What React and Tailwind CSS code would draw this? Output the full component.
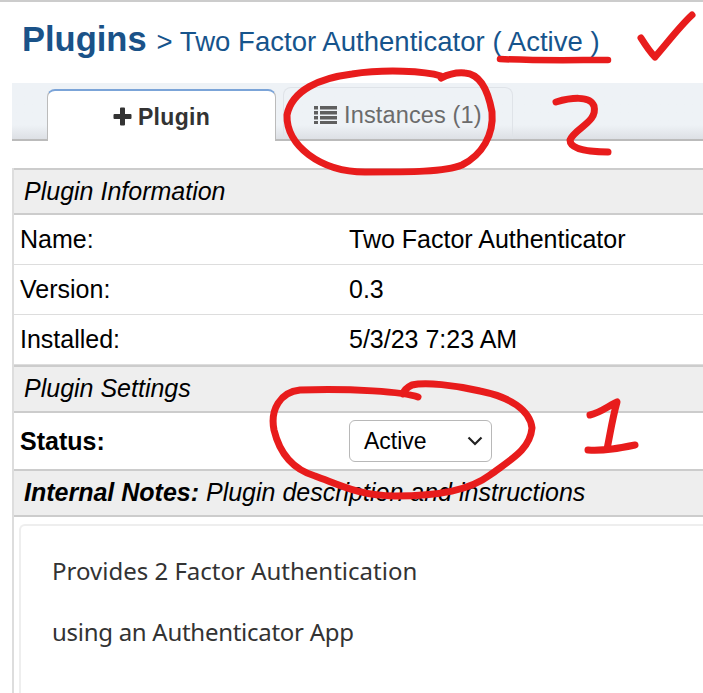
import React from "react";

const Row = ({ label, value }) => (
  <div className="flex h-[50px] items-center border-b border-[#dddddd] pb-[1px] last:border-b-0">
    <div className="w-[335px] pl-[6px] pr-2">{label}</div>
    <div>{value}</div>
  </div>
);

const Section = ({ children, h = "h-[48px]" }) => (
  <div className={`flex ${h} items-center border-y-2 border-[#cccccc] bg-[#eeeeee] pb-[2px] pl-[10px] italic`}>{children}</div>
);

export default function App() {
  return (
    <div className="relative h-[693px] w-[703px] overflow-hidden bg-white font-['Liberation_Sans',Arial,sans-serif] text-[25px] leading-[28px] text-black">
      <div className="h-[2px] bg-[#cccccc]" />
      <h1 className="flex h-[81px] items-baseline pl-[22px] pt-[17px] text-[#16548c]">
        <span className="text-[34.500px] leading-[40px] font-bold text-[#1a5288]">Plugins</span>
        <span className="ml-[10px] text-[27.500px] leading-[40px] tracking-[0.03px]">&gt; Two Factor Authenticator ( Active )</span>
      </h1>

      <div className="ml-[12px] flex h-[58px] items-end border-b-2 border-[#bbbbbb] bg-gradient-to-b from-[#eef2f6] from-75% to-[#dde0e5] pl-[35px]">
        <div className="relative z-10 -mb-[2px] flex h-[52px] w-[229px] items-center justify-center gap-[6px] rounded-t-[8px] border-x border-t-2 border-x-[#bbbbbb] border-t-[#7ba4d8] bg-white pt-[1px] font-bold text-[#333333]">
          <svg width="19" height="19" viewBox="0 0 19 19" fill="#333333" aria-hidden="true">
            <path d="M7 1.500a1 1 0 0 1 1-1h3a1 1 0 0 1 1 1V7h5.500a1 1 0 0 1 1 1v3a1 1 0 0 1-1 1H12v5.500a1 1 0 0 1-1 1H8a1 1 0 0 1-1-1V12H1.500a1 1 0 0 1-1-1V8a1 1 0 0 1 1-1H7z" />
          </svg>
          <span className="text-[23px] tracking-[0.3px]">Plugin</span>
        </div>
        <div className="ml-[7px] flex h-[52px] w-[230px] items-center gap-[7px] rounded-t-[8px] border-x border-t border-[#dfe3e8] pl-[30px] pt-[2px] text-[#6b6b6b]">
          <svg width="23" height="19" viewBox="0 0 23 19" fill="#5f5f5f" aria-hidden="true">
            <path d="M0 1h4v3.500H0zM6 1h17v3.500H6zM0 6h4v3.500H0zM6 6h17v3.500H6zM0 11h4v3.500H0zM6 11h17v3.500H6zM0 16h4v3H0zM6 16h17v3H6z" />
          </svg>
          <span className="text-[23.500px] tracking-[0.15px]">Instances (1)</span>
        </div>
      </div>

      <div className="ml-[12px] mt-[27px] border-l-2 border-[#dddddd]">
        <Section h="h-[47px]">Plugin Information</Section>
        <Row label="Name:" value="Two Factor Authenticator" />
        <Row label="Version:" value="0.3" />
        <Row label="Installed:" value="5/3/23 7:23 AM" />
        <Section>Plugin Settings</Section>
        <div className="flex h-[56px] items-center">
          <div className="w-[335px] pl-[6px] font-bold">Status:</div>
          <div className="flex h-[42px] w-[143px] items-center justify-between rounded-[6px] border border-[#b8b8b8] bg-white pl-[14px] pr-[8px] text-[23px]">
            <span>Active</span>
            <svg width="16" height="10" viewBox="0 0 16 10" fill="none" stroke="#222222" strokeWidth="2.200" aria-hidden="true">
              <path d="M1.500 1.500 8 8l6.500-6.500" />
            </svg>
          </div>
        </div>
        <Section>
          <span><b>Internal Notes:</b> Plugin description and instructions</span>
        </Section>
        <div className="pl-[5px] pt-[7px]">
          <div className="h-[200px] rounded-tl-[6px] border-l-2 border-t-2 border-[#eeeeee] pl-[31px] pt-[29px] font-['Noto_Sans',sans-serif] text-[24px] text-[#333333]">
            <p className="leading-[32px]">Provides 2 Factor Authentication</p>
            <p className="mt-[29px] leading-[32px] tracking-[-0.28px]">using an Authenticator App</p>
          </div>
        </div>
      </div>

      <svg className="pointer-events-none absolute inset-0" width="703" height="693" viewBox="0 0 703 693" fill="none" stroke="#e81c1c" strokeWidth="7" strokeLinecap="round" strokeLinejoin="round" aria-hidden="true">
        <path d="M500 59C540 61 575 60 608 60" strokeWidth="6.500" />
        <path d="M641 38C646 46 650 52 655 57C668 42 680 26 692 15" />
        <path d="M441 76C425 71 385 69 352 74C320 78 292 90 287 115C286 145 320 172 365 172C410 172 445 172 462 165C482 155 494 135 492 112C488 90 480 74 465 73C455 72 447 75 441 78" />
        <path d="M556 102C570 98 590 95 594 106C598 122 575 128 570 140C570 150 590 152 608 152" />
        <path d="M418 397C405 392 350 388 300 390C280 392 270 410 274 430C280 455 295 470 315 476C340 485 360 496 395 496C440 496 470 490 490 475C510 460 530 450 532 428C530 410 510 397 480 391C455 385 425 382 412 385C406 388 404 390 403 394" />
        <path d="M590 415C600 413 610 405 617 402C612 420 610 435 607 449M588 450C605 451 620 448 635 445" />
      </svg>
    </div>
  );
}
